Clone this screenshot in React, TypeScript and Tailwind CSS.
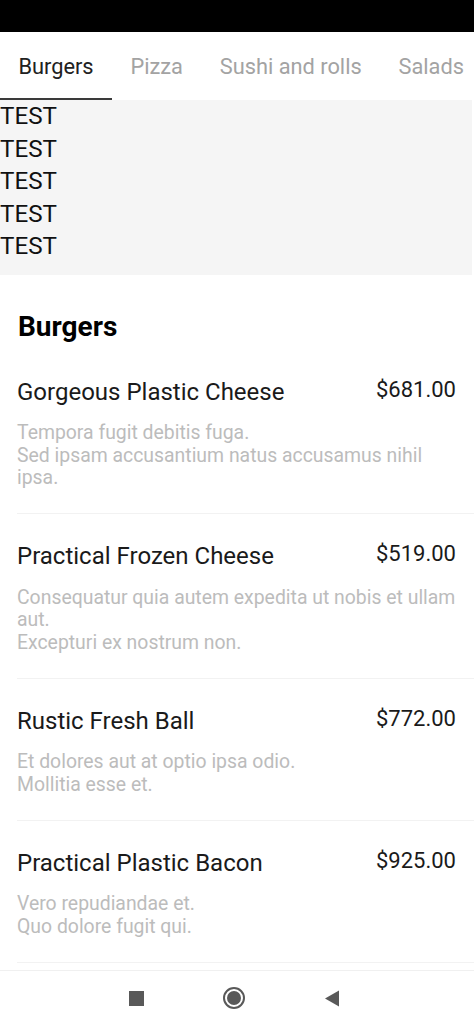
import React, { useState } from "react";

const tabs = ["Burgers", "Pizza", "Sushi and rolls", "Salads", "Drinks"];

const items = [
  {
    id: 1,
    name: "Gorgeous Plastic Cheese",
    price: "$681.00",
    description: ["Tempora fugit debitis fuga.", "Sed ipsam accusantium natus accusamus nihil ipsa."],
  },
  {
    id: 2,
    name: "Practical Frozen Cheese",
    price: "$519.00",
    description: ["Consequatur quia autem expedita ut nobis et ullam aut.", "Excepturi ex nostrum non."],
  },
  {
    id: 3,
    name: "Rustic Fresh Ball",
    price: "$772.00",
    description: ["Et dolores aut at optio ipsa odio.", "Mollitia esse et."],
  },
  {
    id: 4,
    name: "Practical Plastic Bacon",
    price: "$925.00",
    description: ["Vero repudiandae et.", "Quo dolore fugit qui."],
  },
];

function NavBar() {
  return (
    <div className="h-[57px] border-t border-[#f0f0f0] bg-white flex flex-row items-center justify-center gap-[78px] pb-[2px] pr-[5px]">
      <div className="w-[15px] h-[15px] bg-[#595959]" />
      <svg width="24" height="24" viewBox="0 0 24 24">
        <circle cx="12" cy="12" r="10" fill="none" stroke="#595959" strokeWidth="2" />
        <circle cx="12" cy="12" r="7" fill="#595959" />
      </svg>
      <svg width="16" height="17" viewBox="0 0 16 17">
        <path d="M15 0.5 L15 16.5 L1 8.5 Z" fill="#595959" />
      </svg>
    </div>
  );
}

export default function App() {
  const [active, setActive] = useState(0);

  return (
    <div
      className="w-[474px] h-[1027px] bg-white flex flex-col overflow-hidden text-[#212121]"
      style={{ fontFamily: "Roboto, 'Noto Sans', sans-serif" }}
    >
      <div className="h-[32px] bg-black shrink-0" />

      <div className="h-[68px] shrink-0 flex flex-row overflow-hidden whitespace-nowrap">
        {tabs.map((tab, i) => (
          <button
            key={tab}
            onClick={() => setActive(i)}
            className={
              i === active
                ? "px-[18.4px] pt-[5px] text-[21.8px] text-[#212121] border-b-2 border-[#3a3a3a] shrink-0"
                : "px-[18.4px] pt-[5px] text-[21.8px] text-[#a3a3a3] border-b-2 border-transparent shrink-0"
            }
          >
            {tab}
          </button>
        ))}
      </div>

      <div className="flex-1 overflow-hidden">
        <div className="w-[472px] bg-[#f5f5f5] pb-[12px] text-[24.2px] leading-[32.5px] text-[#111]">
          <div>TEST</div>
          <div>TEST</div>
          <div>TEST</div>
          <div>TEST</div>
          <div>TEST</div>
        </div>

        <div className="pt-[36px]">
          <h2 className="px-[18px] text-[28px] leading-[32px] font-bold text-black mb-[7px]">Burgers</h2>
          {items.map((item) => (
            <div key={item.id} className="ml-[17px] border-b border-[#f2f2f2] pt-[28px] pb-[23.25px]">
              <div className="flex flex-row justify-between items-start pr-[18px]">
                <div className="text-[24px] leading-[28px] text-[#1a1a1a]">{item.name}</div>
                <div className="text-[22px] leading-[24px] text-[#1a1a1a]">{item.price}</div>
              </div>
              <div className="mt-[16.75px] pr-[14px] text-[19.4px] leading-[22.5px] text-[#bcbcbc]">
                {item.description.map((line) => (
                  <div key={line}>{line}</div>
                ))}
              </div>
            </div>
          ))}
        </div>
      </div>

      <NavBar />
    </div>
  );
}
